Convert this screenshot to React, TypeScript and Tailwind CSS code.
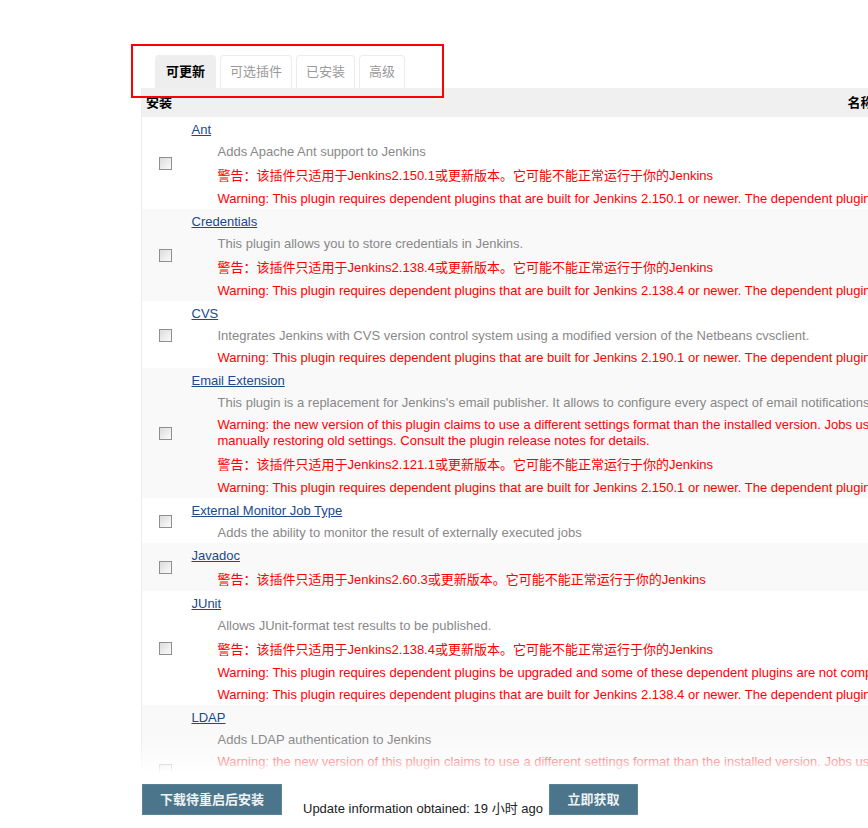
import React from "react";

type Line = { kind: "desc" | "warn" | "cn"; text: string[] };

const cn = (v: string): Line => ({
  kind: "cn",
  text: [`警告：该插件只适用于Jenkins${v}或更新版本。它可能不能正常运行于你的Jenkins`],
});

const dep = (v: string): Line => ({
  kind: "warn",
  text: [
    `Warning: This plugin requires dependent plugins that are built for Jenkins ${v} or newer. The dependent plugins may or may not work in your Jenkins and consequently this plugin may or may not work in your Jenkins.`,
  ],
});

const settings: Line = {
  kind: "warn",
  text: [
    "Warning: the new version of this plugin claims to use a different settings format than the installed version. Jobs using this plugin may need to be reconfigured, and/or you may not be able to cleanly revert to the prior version without",
    "manually restoring old settings. Consult the plugin release notes for details.",
  ],
};

const desc = (t: string): Line => ({ kind: "desc", text: [t] });

const plugins: { name: string; lines: Line[]; cut?: boolean }[] = [
  { name: "Ant", lines: [desc("Adds Apache Ant support to Jenkins"), cn("2.150.1"), dep("2.150.1")] },
  {
    name: "Credentials",
    lines: [desc("This plugin allows you to store credentials in Jenkins."), cn("2.138.4"), dep("2.138.4")],
  },
  {
    name: "CVS",
    lines: [
      desc("Integrates Jenkins with CVS version control system using a modified version of the Netbeans cvsclient."),
      dep("2.190.1"),
    ],
  },
  {
    name: "Email Extension",
    lines: [
      desc(
        "This plugin is a replacement for Jenkins's email publisher. It allows to configure every aspect of email notifications: when an email is sent, who should receive it and what the email says"
      ),
      settings,
      cn("2.121.1"),
      dep("2.150.1"),
    ],
  },
  {
    name: "External Monitor Job Type",
    lines: [desc("Adds the ability to monitor the result of externally executed jobs")],
  },
  { name: "Javadoc", lines: [cn("2.60.3")] },
  {
    name: "JUnit",
    lines: [
      desc("Allows JUnit-format test results to be published."),
      cn("2.138.4"),
      {
        kind: "warn",
        text: [
          "Warning: This plugin requires dependent plugins be upgraded and some of these dependent plugins are not compatible with the installed version. Jobs using these dependent plugins may need to be reconfigured.",
        ],
      },
      dep("2.138.4"),
    ],
  },
  // rest of this row sits below the fade; a spacer keeps the row's height
  { name: "LDAP", lines: [desc("Adds LDAP authentication to Jenkins"), settings], cut: true },
];

function Checkbox() {
  return (
    <span className="inline-block w-[13px] h-[13px] border border-[#8e8f8f] bg-linear-to-br from-[#dcdcdc] to-[#fbfbfb] align-middle" />
  );
}

const tabs = ["可更新", "可选插件", "已安装", "高级"];

export default function App() {
  return (
    <div
      className="relative w-[868px] h-[828px] overflow-hidden bg-white text-[13px] text-[#333]"
      style={{ fontFamily: '"Liberation Sans", Arial, "Noto Sans CJK SC", sans-serif' }}
    >
      <div className="flex gap-1 pt-[55px] pl-[155px]">
        {tabs.map((t, i) =>
          i === 0 ? (
            <div key={t} className="h-[33px] px-[11px] flex items-center rounded-t-[4px] bg-[#eeeeee] font-bold text-black">
              {t}
            </div>
          ) : (
            <div
              key={t}
              className="h-[33px] px-[9px] flex items-center rounded-t-[4px] border border-b-0 border-[#ececec] text-[#9a9a9a]"
            >
              {t}
            </div>
          )
        )}
      </div>

      <div className="h-[684px] overflow-hidden">
        <table className="ml-[141px] w-[1700px] table-fixed border-collapse border-l border-[#eeeeee]">
          <colgroup>
            <col className="w-[47px]" />
            <col className="w-[1344px]" />
            <col />
          </colgroup>
          <thead>
            <tr className="h-[29px] bg-[#f0f0f0] text-black">
              <th className="text-left pl-[4px] font-bold">安装</th>
              <th className="text-center font-bold">名称</th>
              <th className="text-center font-bold">版本</th>
            </tr>
          </thead>
          <tbody>
            {plugins.map((p, i) => (
              <tr key={p.name} className={i % 2 === 1 ? "bg-[#f9f9f9]" : "bg-white"}>
                <td className="text-center align-middle">
                  <Checkbox />
                </td>
                <td className="pl-[3px] pt-[5px] pb-[2px] align-top leading-[16px]">
                  <a href="#" className="text-[#204a87] underline">
                    {p.name}
                  </a>
                  {p.lines.map((l, j) => (
                    <div
                      key={j}
                      className={`mt-[6px] ml-[26px] whitespace-nowrap ${
                        l.kind === "desc"
                          ? "text-[#888888]"
                          : l.kind === "cn"
                          ? "text-[#ff0000] leading-[19px]"
                          : "text-[#ff0000]"
                      }`}
                    >
                      {l.text.map((t, k) => (
                        <div key={k}>{t}</div>
                      ))}
                    </div>
                  ))}
                  {p.cut && <div className="h-[47px]" />}
                </td>
                <td />
              </tr>
            ))}
          </tbody>
        </table>
      </div>

      <div className="absolute left-0 right-0 top-[740px] bottom-0 flex flex-col">
        <div className="h-[34px] bg-linear-to-b from-white/0 to-white" />
        <div className="flex-1 bg-white pt-[10px] pl-[142px] flex items-start">
          <button className="w-[140px] h-[31px] bg-[#4b758b] border border-[#5d8399] text-[#eef2f4] font-bold">
            下载待重启后安装
          </button>
          <span className="ml-[21px] mt-[17px] leading-[16px] text-[#222]">Update information obtained: 19 小时 ago</span>
          <button className="ml-[6px] w-[89px] h-[31px] bg-[#4b758b] border border-[#5d8399] text-[#eef2f4] font-bold">
            立即获取
          </button>
        </div>
      </div>

      <div className="absolute left-[131px] top-[44px] w-[313px] h-[54px] border-2 border-[#ff0000]" />
    </div>
  );
}
